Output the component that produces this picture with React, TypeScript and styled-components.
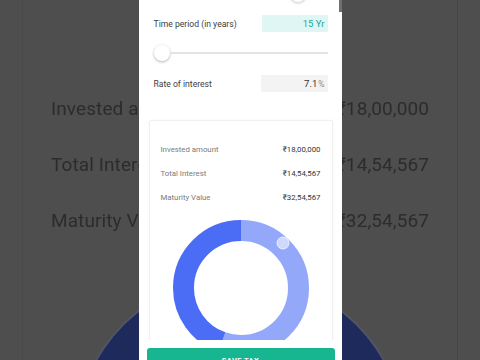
import React from "react";
import styled, { createGlobalStyle } from "styled-components";

const Global = createGlobalStyle`
  html, body { margin: 0; padding: 0; background: #4e4e4e; }
  body { font-family: Roboto, "Liberation Sans", sans-serif; }
  * { box-sizing: border-box; }
`;

const Stage = styled.div`
  position: relative;
  width: 480px;
  height: 360px;
  overflow: hidden;
  background: #4e4e4e;
  display: flex;
  justify-content: center;
`;

const Backdrop = styled.div`
  position: absolute;
  inset: 0;
  filter: blur(0.6px);
`;

const BackdropCard = styled.div`
  position: absolute;
  top: -10px;
  bottom: -10px;
  left: 22px;
  right: 22px;
  border-left: 1px solid rgba(0, 0, 0, 0.07);
  border-right: 1px solid rgba(0, 0, 0, 0.1);
  padding: 90px 28px 0 28px;
  display: flex;
  flex-direction: column;
`;

const BackdropRow = styled.div`
  height: 56px;
  display: flex;
  align-items: center;
  justify-content: space-between;
  font-size: 19px;
  color: #2c2c2c;
  letter-spacing: 0.1px;
`;

const BackdropCircle = styled.div`
  position: absolute;
  left: 76px;
  top: 277px;
  width: 328px;
  height: 328px;
  border-radius: 50%;
  background: #1d2a5b;
  box-shadow: 0 0 0 2px rgba(90, 100, 140, 0.35);
`;

const Phone = styled.div`
  position: relative;
  z-index: 1;
  width: 203px;
  height: 360px;
  background: #ffffff;
  display: flex;
  flex-direction: column;
  overflow: hidden;
`;

const ScrollBar = styled.div`
  position: absolute;
  top: 0;
  right: 0;
  width: 3px;
  height: 12px;
  background: #707070;
  z-index: 2;
`;

const ScrollArea = styled.div`
  flex: none;
  height: 340px;
  overflow: hidden;
  padding: 0 14px 0 15px;
  display: flex;
  flex-direction: column;
  & > * {
    flex-shrink: 0;
  }
`;

const PrevThumb = styled.div`
  margin-top: -14px;
  margin-left: 136px;
  width: 16px;
  height: 16px;
  border-radius: 50%;
  background: #fff;
  box-shadow: 0 1px 3px rgba(0, 0, 0, 0.22);
`;

const FieldRow = styled.div<{ $top: number }>`
  margin-top: ${(p) => p.$top}px;
  display: flex;
  align-items: center;
  justify-content: space-between;
  height: 17px;
`;

const Label = styled.span`
  font-size: 8.6px;
  color: #3d3d3d;
`;

const InputBox = styled.div<{ $bg: string; $color: string; $w: number }>`
  width: ${(p) => p.$w}px;
  height: 17px;
  background: ${(p) => p.$bg};
  color: ${(p) => p.$color};
  font-size: 9.5px;
  display: flex;
  align-items: center;
  justify-content: flex-end;
  padding-right: 3px;
  border-radius: 1px;
`;

const Unit = styled.span`
  color: #8a8a8a;
  font-size: 8.5px;
  margin-left: 1px;
`;

const SliderRow = styled.div`
  margin-top: 13px;
  height: 16px;
  display: flex;
  align-items: center;
`;

const Thumb = styled.div`
  width: 16px;
  height: 16px;
  border-radius: 50%;
  background: #fff;
  box-shadow: 0 1px 3px rgba(0, 0, 0, 0.3);
  flex: none;
`;

const Track = styled.div`
  flex: 1;
  height: 2px;
  background: #e4e4e4;
`;

const Card = styled.div`
  margin: 28px -5px 0 -5px;
  border: 1px solid #f0f0f0;
  border-radius: 2px;
  box-shadow: 0 0 3px rgba(0, 0, 0, 0.04);
  padding: 16px 11px 0 11px;
  display: flex;
  flex-direction: column;
`;

const StatRow = styled.div`
  height: 24px;
  display: flex;
  align-items: center;
  justify-content: space-between;
  font-size: 7.8px;
`;

const StatLabel = styled.span`
  color: #7b7b7b;
`;

const StatValue = styled.span`
  color: #333;
`;

const DonutWrap = styled.div`
  margin-top: 11px;
  display: flex;
  justify-content: center;
`;

const Footer = styled.div`
  flex: 1;
  min-height: 0;
  background: #fff;
  padding: 8px 7px 0 8px;
`;

const SaveButton = styled.button`
  width: 100%;
  height: 30px;
  border: none;
  border-radius: 3px;
  background: #17b590;
  color: #fff;
  font-family: Roboto, "Liberation Sans", sans-serif;
  font-weight: 700;
  font-size: 7.5px;
  letter-spacing: 0.4px;
  display: flex;
  justify-content: center;
  padding-top: 8px;
`;

const stats = [
  ["Invested amount", "₹18,00,000"],
  ["Total Interest", "₹14,54,567"],
  ["Maturity Value", "₹32,54,567"],
];

function Donut() {
  const r = 57.5;
  const C = 2 * Math.PI * r;
  const invested = 1800000 / 3254567;
  return (
    <svg width="136" height="136" viewBox="0 0 136 136">
      <g transform="rotate(-90 68 68)">
        <circle
          cx="68"
          cy="68"
          r={r}
          fill="none"
          stroke="#94a8fa"
          strokeWidth="21"
          strokeDasharray={`${invested * C} ${C}`}
        />
        <circle
          cx="68"
          cy="68"
          r={r}
          fill="none"
          stroke="#4b6cf5"
          strokeWidth="21"
          strokeDasharray={`${(1 - invested) * C} ${C}`}
          strokeDashoffset={-invested * C}
        />
      </g>
      <circle cx="110" cy="23" r="6" fill="rgba(255,255,255,0.55)" stroke="rgba(255,255,255,0.7)" strokeWidth="1" />
    </svg>
  );
}

export default function App() {
  return (
    <>
      <Global />
      <Stage>
        <Backdrop>
          <BackdropCard>
            {stats.map(([l, v]) => (
              <BackdropRow key={l}>
                <span>{l}</span>
                <span>{v}</span>
              </BackdropRow>
            ))}
          </BackdropCard>
          <BackdropCircle />
        </Backdrop>
        <Phone>
          <ScrollBar />
          <ScrollArea>
            <PrevThumb />
            <FieldRow $top={13}>
              <Label>Time period (in years)</Label>
              <InputBox $bg="#dff6f5" $color="#1aa596" $w={66}>
                15 Yr
              </InputBox>
            </FieldRow>
            <SliderRow>
              <Thumb />
              <Track />
            </SliderRow>
            <FieldRow $top={14}>
              <Label>Rate of interest</Label>
              <InputBox $bg="#f3f3f3" $color="#333" $w={67}>
                7.1<Unit>%</Unit>
              </InputBox>
            </FieldRow>
            <Card>
              {stats.map(([l, v]) => (
                <StatRow key={l}>
                  <StatLabel>{l}</StatLabel>
                  <StatValue>{v}</StatValue>
                </StatRow>
              ))}
              <DonutWrap>
                <Donut />
              </DonutWrap>
            </Card>
          </ScrollArea>
          <Footer>
            <SaveButton>SAVE TAX</SaveButton>
          </Footer>
        </Phone>
      </Stage>
    </>
  );
}
